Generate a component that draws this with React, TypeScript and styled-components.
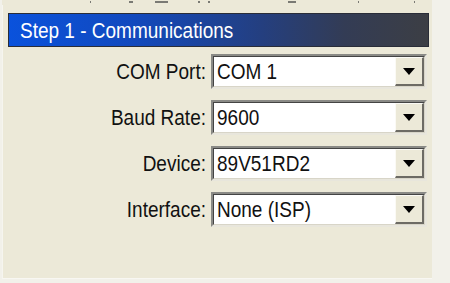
import React from "react";
import styled, { createGlobalStyle } from "styled-components";

const Global = createGlobalStyle`
  html, body { margin: 0; padding: 0; background: #f2f1ea; }
  #root { width: 450px; height: 283px; overflow: hidden; }
`;

const Page = styled.div`
  width: 450px;
  height: 283px;
  background: #f2f1ea;
  font-family: "DejaVu Sans", "Liberation Sans", sans-serif;
  display: flex;
  flex-direction: column;
`;

const TopStrip = styled.div`
  height: 5px;
  position: relative;
  background: #ece9d8;
  margin: 0 18px 0 2px;
`;

const Mark = styled.span<{ $x: number; $w: number }>`
  position: absolute;
  top: 1px;
  left: ${(p) => p.$x}px;
  width: ${(p) => p.$w}px;
  height: 2px;
  background: #4a4a4a;
  opacity: 0.7;
`;

const Panel = styled.div`
  flex: 1;
  margin: 0 18px 4px 2px;
  background: #ece9d8;
  border-left: 1px solid #f6f5ef;
  border-bottom: 1px solid #f8f7f2;
  padding: 8px 0 0 5px;
  display: flex;
  flex-direction: column;
`;

const Header = styled.div`
  height: 34px;
  width: 421px;
  box-sizing: border-box;
  border: 1px solid #2a2d38;
  background: linear-gradient(to right, #0a52dc 0%, #1249bd 30%, #243f80 60%, #333c55 80%, #3c3e44 100%);
  display: flex;
  align-items: center;
  padding-left: 11px;
  color: #ffffff;
`;

const Stretch = styled.span<{ $size: number }>`
  display: inline-block;
  font-family: "Liberation Sans", Arial, sans-serif;
  font-size: ${(p) => p.$size}px;
  transform: scaleY(1.15);
  white-space: nowrap;
  line-height: 1;
`;

const Form = styled.div`
  display: flex;
  flex-direction: column;
  gap: 11px;
  margin-top: 7px;
`;

const Row = styled.div`
  display: grid;
  grid-template-columns: 198px 216px;
  column-gap: 5px;
  align-items: center;
  height: 35px;
`;

const Label = styled.div`
  text-align: right;
  color: #111;
`;

const Combo = styled.div`
  height: 35px;
  box-sizing: border-box;
  border-style: solid;
  border-width: 2px;
  border-color: #8a8a86 #e8e6dc #e8e6dc #8a8a86;
  background: #fff;
  display: flex;
  align-items: stretch;
`;

const ComboInner = styled.div`
  flex: 1;
  display: flex;
  border-style: solid;
  border-width: 1px;
  border-color: #444 #d8d5c8 #d8d5c8 #444;
  background: #fff;
`;

const Value = styled.div`
  flex: 1;
  display: flex;
  align-items: center;
  padding-left: 3px;
  color: #111;
`;

const Button = styled.div`
  width: 29px;
  background: #ece9d8;
  box-sizing: border-box;
  border-style: solid;
  border-width: 1px 2px 2px 1px;
  border-color: #fbfaf5 #6d6b64 #6d6b64 #fbfaf5;
  display: flex;
  align-items: center;
  justify-content: center;
`;

const Arrow = styled.div`
  width: 0;
  height: 0;
  border-left: 6px solid transparent;
  border-right: 6px solid transparent;
  border-top: 7px solid #000;
`;

const rows = [
  { label: "COM Port:", value: "COM 1" },
  { label: "Baud Rate:", value: "9600" },
  { label: "Device:", value: "89V51RD2" },
  { label: "Interface:", value: "None (ISP)" },
];

export default function App() {
  return (
    <>
      <Global />
      <Page>
        <TopStrip>
          <Mark $x={88} $w={1} />
          <Mark $x={127} $w={4} />
          <Mark $x={153} $w={13} />
          <Mark $x={196} $w={2} />
          <Mark $x={206} $w={2} />
          <Mark $x={286} $w={8} />
          <Mark $x={356} $w={1} />
          <Mark $x={412} $w={1} />
        </TopStrip>
        <Panel>
          <Header>
            <Stretch $size={19}>Step 1 - Communications</Stretch>
          </Header>
          <Form>
            {rows.map((r) => (
              <Row key={r.label}>
                <Label>
                  <Stretch $size={19}>{r.label}</Stretch>
                </Label>
                <Combo>
                  <ComboInner>
                    <Value>
                      <Stretch $size={19}>{r.value}</Stretch>
                    </Value>
                    <Button>
                      <Arrow />
                    </Button>
                  </ComboInner>
                </Combo>
              </Row>
            ))}
          </Form>
        </Panel>
      </Page>
    </>
  );
}
